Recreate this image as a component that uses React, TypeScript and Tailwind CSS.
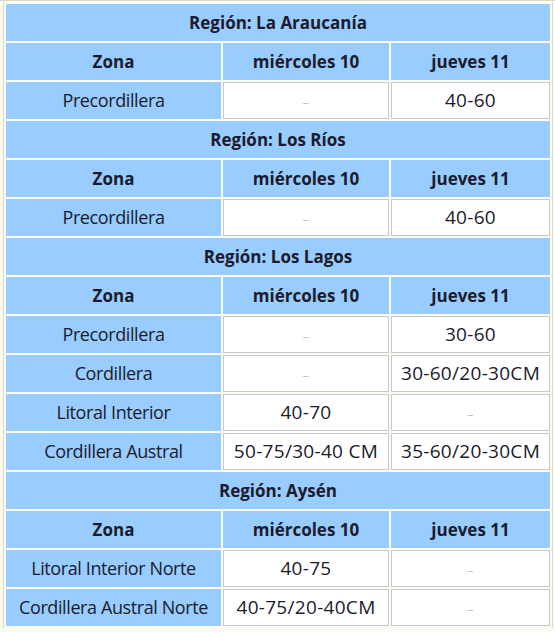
type Row = [string, string, string];

const regions: { name: string; rows: Row[] }[] = [
  { name: "Región: La Araucanía", rows: [["Precordillera", "-", "40-60"]] },
  { name: "Región: Los Ríos", rows: [["Precordillera", "-", "40-60"]] },
  {
    name: "Región: Los Lagos",
    rows: [
      ["Precordillera", "-", "30-60"],
      ["Cordillera", "-", "30-60/20-30CM"],
      ["Litoral Interior", "40-70", "-"],
      ["Cordillera Austral", "50-75/30-40 CM", "35-60/20-30CM"],
    ],
  },
  {
    name: "Región: Aysén",
    rows: [
      ["Litoral Interior Norte", "40-75", "-"],
      ["Cordillera Austral Norte", "40-75/20-40CM", "-"],
    ],
  },
];

const blue = "bg-[#99ccff] border border-[#99ccff]";
const white = "bg-white border border-[#c9c9c9] text-[19px] tracking-[0.3px]";

const Value = ({ v }: { v: string }) =>
  v === "-" ? <span className="text-[#c4c4c4] text-[13px]">–</span> : <>{v}</>;

export default function App() {
  return (
    <div className="w-[555px] h-[632px] bg-[#fcfcf4] border-t border-[#ddd6c0] overflow-hidden">
      <table
        className="ml-[3px] mt-[1px] w-[550px] table-fixed border-separate border-spacing-[2px] border-x border-[#ddd6c0] text-[#1b1b2b] text-[17px] text-center"
        style={{ fontFamily: '"Open Sans", sans-serif' }}
      >
        <colgroup>
          <col className="w-[215px]" />
          <col className="w-[166px]" />
          <col />
        </colgroup>
        <tbody>
          {regions.map((r) => (
            <>
              <tr key={r.name} className="h-[37px]">
                <td colSpan={3} className={`${blue} font-bold`}>
                  {r.name}
                </td>
              </tr>
              <tr className="h-[37px] font-bold">
                <td className={blue}>Zona</td>
                <td className={blue}>miércoles 10</td>
                <td className={blue}>jueves 11</td>
              </tr>
              {r.rows.map((row) => (
                <tr key={row[0]} className="h-[37px]">
                  <td className={`${blue} text-[18px] tracking-[-0.4px]`}>{row[0]}</td>
                  <td className={white}>
                    <Value v={row[1]} />
                  </td>
                  <td className={white}>
                    <Value v={row[2]} />
                  </td>
                </tr>
              ))}
            </>
          ))}
        </tbody>
      </table>
    </div>
  );
}
